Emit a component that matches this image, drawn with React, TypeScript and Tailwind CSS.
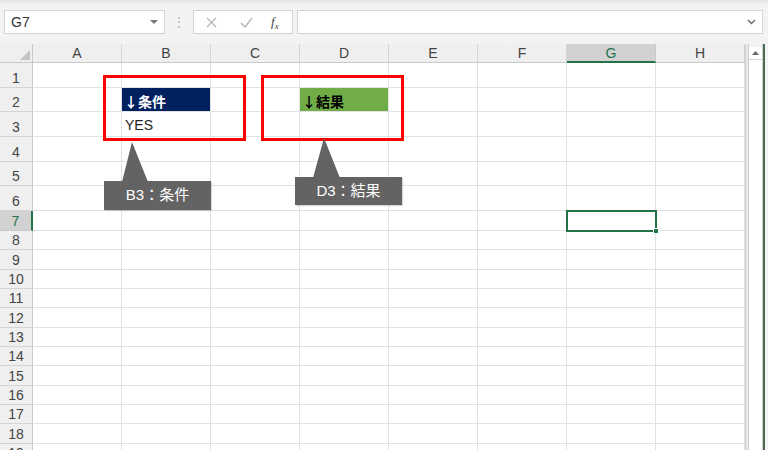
import React from "react";

const COLS = ["A", "B", "C", "D", "E", "F", "G", "H"];
const ROW_HEIGHTS = [25, 24, 25, 25, 24, 25, 20, 19, 20, 19, 19, 20, 19, 19, 20, 19, 19, 20, 19];

const FONT = { fontFamily: '"Liberation Sans", "Noto Sans CJK JP", Arial, sans-serif' };
const JP = { fontFamily: '"Noto Sans CJK JP", "Liberation Sans", sans-serif' };

function Cell({ row, col }: { row: number; col: number }) {
  if (row === 2 && col === 1) {
    return (
      <div className="w-[89px] h-full border-r border-b border-[#e1e1e1] bg-[#002060] flex items-end pb-[2px] px-[2px] text-white text-[14px] font-bold leading-[16px]" style={JP}>
        ↓条件
      </div>
    );
  }
  if (row === 2 && col === 3) {
    return (
      <div className="w-[89px] h-full border-r border-b border-[#e1e1e1] bg-[#70ad47] flex items-end pb-[2px] px-[2px] text-black text-[14px] font-bold leading-[16px]" style={JP}>
        ↓結果
      </div>
    );
  }
  if (row === 3 && col === 1) {
    return (
      <div className="w-[89px] h-full border-r border-b border-[#e1e1e1] bg-white flex items-end pb-[3px] px-[3px] text-[#222] text-[14px] leading-[16px]">
        YES
      </div>
    );
  }
  return <div className="w-[89px] h-full border-r border-b border-[#e1e1e1] bg-white" />;
}

function Callout({ left, top, apexX, apexY, baseL, baseR, h, label }: {
  left: number; top: number; apexX: number; apexY: number; baseL: number; baseR: number; h: number; label: string;
}) {
  return (
    <>
      <svg className="absolute left-0 top-0" width={768} height={450}>
        <polygon points={`${apexX},${apexY} ${baseL},${top + 1} ${baseR},${top + 1}`} fill="#636363" />
      </svg>
      <div
        className="absolute bg-[#636363] text-white text-[15px] flex items-center justify-center shadow-[1px_1px_1px_rgba(0,0,0,0.15)]"
        style={{ left, top, width: 107, height: h }}
      >
        {label}
      </div>
    </>
  );
}

export default function App() {
  return (
    <div className="relative w-[768px] h-[450px] overflow-hidden bg-[#f3f3f3]" style={FONT}>
      {/* Formula bar */}
      <div className="h-[44px] flex items-start pt-[10px] pl-[4px] bg-gradient-to-b from-[#e2e2e2] via-[#f3f3f3] via-[10%] to-[#f3f3f3]">
        <div className="w-[161px] h-[24px] bg-white border border-[#d4d4d4] flex items-center pl-[6px] pr-[6px]">
          <span className="text-[14px] text-[#333] flex-1">G7</span>
          <svg width="8" height="5" viewBox="0 0 8 5"><polygon points="0,0 8,0 4,4" fill="#777" /></svg>
        </div>
        <div className="w-[28px] h-[24px] flex items-center justify-center text-[#b0b0b0] text-[12px] leading-none">⋮</div>
        <div className="w-[100px] h-[24px] bg-white border border-[#d4d4d4] flex items-center">
          <svg className="ml-[12px]" width="11" height="11" viewBox="0 0 11 11">
            <path d="M1 1 L10 10 M10 1 L1 10" stroke="#b8b8b8" strokeWidth="1.3" />
          </svg>
          <svg className="ml-[23px]" width="13" height="11" viewBox="0 0 13 11">
            <path d="M1 6 L5 10 L12 1" stroke="#b8b8b8" strokeWidth="1.5" fill="none" />
          </svg>
          <span className="ml-[18px] text-[13px] italic text-[#444]" style={{ fontFamily: '"Liberation Serif", serif' }}>
            f<sub className="text-[9px]">x</sub>
          </span>
        </div>
        <div className="ml-[4px] w-[466px] h-[24px] bg-white border border-[#d4d4d4] flex items-center justify-end pr-[6px]">
          <svg width="9" height="6" viewBox="0 0 9 6"><path d="M1 1 L4.5 4.5 L8 1" stroke="#666" strokeWidth="1.4" fill="none" /></svg>
        </div>
      </div>

      <div className="flex">
        {/* Grid */}
        <div className="w-[745px] flex flex-col">
          <div className="flex h-[19px]">
            <div className="w-[33px] h-full bg-[#efefef] border-r border-b border-[#c9c9c9] flex items-end justify-end p-[2px]">
              <svg width="10" height="10" viewBox="0 0 10 10"><polygon points="10,0 10,10 0,10" fill="#c4c4c4" /></svg>
            </div>
            {COLS.map((c) =>
              c === "G" ? (
                <div key={c} className="w-[89px] h-full bg-[#d2d2d2] border-r border-[#c9c9c9] border-b-2 border-b-[#217346] flex items-center justify-center pt-[1px] text-[14px] text-[#217346]">
                  {c}
                </div>
              ) : (
                <div key={c} className="w-[89px] h-full bg-[#efefef] border-r border-b border-[#d4d4d4] border-b-[#c9c9c9] flex items-center justify-center pt-[1px] text-[14px] text-[#444]">
                  {c}
                </div>
              )
            )}
          </div>
          {ROW_HEIGHTS.map((h, r) => (
            <div key={r} className="flex" style={{ height: h }}>
              {r + 1 === 7 ? (
                <div className="w-[33px] h-full bg-[#d2d2d2] border-r-2 border-[#217346] border-b border-b-[#c9c9c9] flex items-end justify-center pb-[1px] text-[14px] leading-[16px] text-[#217346]">
                  {r + 1}
                </div>
              ) : (
                <div className="w-[33px] h-full bg-[#efefef] border-r border-b border-[#c9c9c9] border-b-[#d4d4d4] flex items-end justify-center pb-[1px] text-[14px] leading-[16px] text-[#444]">
                  {r + 1}
                </div>
              )}
              {COLS.map((c, ci) => (
                <Cell key={c} row={r + 1} col={ci} />
              ))}
            </div>
          ))}
        </div>

        {/* Vertical scrollbar */}
        <div className="w-[4px] h-[406px] bg-[#e8e8e8] border-l border-r border-[#cfcfcf]" />
        <div className="w-[14px] h-[406px] bg-white border-r border-[#cfcfcf] flex flex-col">
          <div className="h-[3px] bg-[#f3f3f3]" />
          <div className="h-[13px] border-b border-[#d4d4d4] flex items-center justify-center">
            <svg width="7" height="4" viewBox="0 0 7 4"><polygon points="0,4 7,4 3.5,0" fill="#666" /></svg>
          </div>
        </div>
        <div className="w-[5px] h-[406px] bg-[#f3f3f3] border-l-2 border-[#4d6b57]" />
      </div>

      {/* Selected cell G7 */}
      <div className="absolute left-[566px] top-[210px] w-[91px] h-[22px] border-2 border-[#217346]" />
      <div className="absolute left-[653px] top-[228px] w-[6px] h-[6px] bg-[#217346] border border-white" />

      {/* Red highlight boxes */}
      <div className="absolute left-[103px] top-[75px] w-[143px] h-[66px] border-[3px] border-[#ff0000]" />
      <div className="absolute left-[261px] top-[75px] w-[143px] h-[66px] border-[3px] border-[#ff0000]" />

      <Callout left={104} top={181} apexX={132} apexY={142} baseL={122} baseR={148} h={29} label="B3：条件" />
      <Callout left={295} top={177} apexX={324} apexY={138} baseL={313} baseR={340} h={28} label="D3：結果" />
    </div>
  );
}
